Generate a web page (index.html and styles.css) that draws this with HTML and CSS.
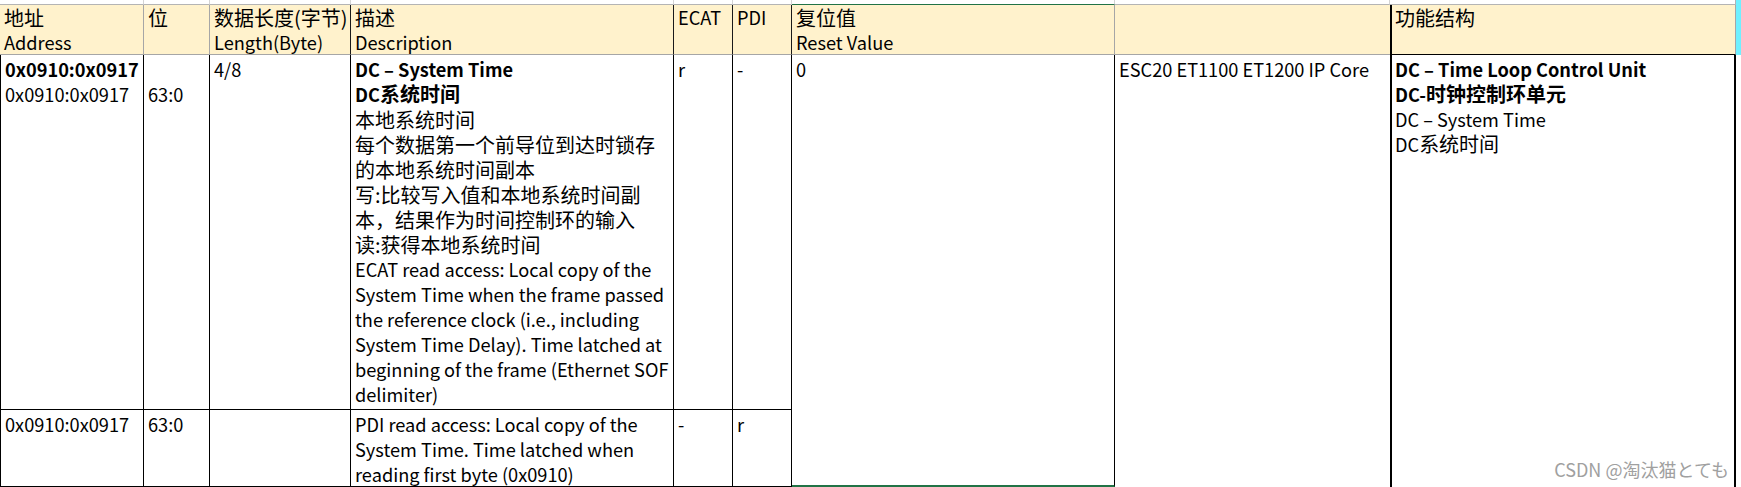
FILE: index.html
```html
<!DOCTYPE html>
<html lang="zh-CN">
<head>
<meta charset="utf-8">
<title>DC – System Time</title>
<link rel="stylesheet" href="styles.css">
</head>
<body>
<div class="sheet">
  <!-- row above header (gridlines of previous row) -->
  <div class="pre"></div>
  <div class="pre"></div>
  <div class="pre"></div>
  <div class="pre"></div>
  <div class="pre"></div>
  <div class="pre"></div>
  <div class="pre pre-sel"></div>
  <div class="pre"></div>
  <div class="pre pre-func"></div>
  <div class="edge"></div>

  <!-- header -->
  <div class="hd gray-r"><div class="zh">地址</div><div>Address</div></div>
  <div class="hd gray-r"><div class="zh">位</div></div>
  <div class="hd dark-r"><div class="zh">数据长度(字节)</div><div>Length(Byte)</div></div>
  <div class="hd dark-r"><div class="zh">描述</div><div>Description</div></div>
  <div class="hd dark-r"><div>ECAT</div></div>
  <div class="hd dark-r"><div>PDI</div></div>
  <div class="hd gray-r"><div class="zh">复位值</div><div>Reset Value</div></div>
  <div class="hd no-r"></div>
  <div class="hd hd-func"><div class="zh">功能结构</div></div>
  <div class="edge"></div>

  <!-- row 1 -->
  <div class="td first"><div class="b">0x0910:0x0917</div><div>0x0910:0x0917</div></div>
  <div class="td"><div>&nbsp;</div><div>63:0</div></div>
  <div class="td"><div>4/8</div></div>
  <div class="td desc">
    <div class="b">DC – System Time</div>
    <div class="b">DC<span class="zh">系统时间</span></div>
    <div class="zh">本地系统时间</div>
    <div class="zh">每个数据第一个前导位到达时锁存</div>
    <div class="zh">的本地系统时间副本</div>
    <div class="zh">写:比较写入值和本地系统时间副</div>
    <div class="zh">本，结果作为时间控制环的输入</div>
    <div class="zh">读:获得本地系统时间</div>
    <div>ECAT read access: Local copy of the</div>
    <div>System Time when the frame passed</div>
    <div>the reference clock (i.e., including</div>
    <div>System Time Delay). Time latched at</div>
    <div>beginning of the frame (Ethernet SOF</div>
    <div>delimiter)</div>
  </div>
  <div class="td"><div>r</div></div>
  <div class="td"><div>-</div></div>
  <div class="td span2 reset"><div>0</div></div>
  <div class="td span2 blank"><div>ESC20 ET1100 ET1200 IP Core</div></div>
  <div class="td span2 func">
    <div class="b">DC – Time Loop Control Unit</div>
    <div class="b">DC-<span class="zh">时钟控制环单元</span></div>
    <div>DC – System Time</div>
    <div>DC<span class="zh">系统时间</span></div>
  </div>
  <div class="span2 edge-body"></div>

  <!-- row 2 -->
  <div class="td first"><div>0x0910:0x0917</div></div>
  <div class="td"><div>63:0</div></div>
  <div class="td"></div>
  <div class="td desc">
    <div>PDI read access: Local copy of the</div>
    <div>System Time. Time latched when</div>
    <div>reading first byte (0x0910)</div>
  </div>
  <div class="td"><div>-</div></div>
  <div class="td"><div>r</div></div>

  <div class="watermark">CSDN @淘汰猫とても</div>
</div>
</body>
</html>
```

FILE: styles.css
```css
* {
  box-sizing: border-box;
}

html, body {
  margin: 0;
  padding: 0;
  background: #ffffff;
}

body {
  font-family: "Noto Sans CJK SC", "Noto Sans", sans-serif;
  font-size: 18.2px;
  line-height: 25px;
  color: #000000;
}

.sheet {
  position: relative;
  display: grid;
  grid-template-columns: 144px 66px 141px 323px 59px 59px 323px 275px 346px 5px;
  grid-template-rows: 5px 50px 355px 77px;
  width: 1741px;
  height: 487px;
  overflow: hidden;
}

.sheet > div > div {
  white-space: nowrap;
  height: 25px;
}

.zh {
  font-size: 20px;
}

span.zh {
  line-height: 1;
}

/* row above the header */
.pre {
  border-right: 1px solid #d4d4d4;
  border-bottom: 1px solid #b4b4b4;
}

.pre-sel {
  border-bottom: 1px solid #217346;
}

.pre-func {
  border-right: 1px solid #b4b4b4;
}

.edge {
  background: #6ff0ff;
}

/* header */
.hd {
  background: #fff2cc;
  border-bottom: 1px solid #a6a6a6;
  padding: 0 3px 0 4px;
}

.gray-r {
  border-right: 1px solid #a6a6a6;
}

.dark-r {
  border-right: 1px solid #1a1a1a;
}

.no-r {
  border-right: none;
}

.hd-func {
  border-left: 2px solid #000000;
  border-right: 1px solid #a6a6a6;
  border-bottom: 1px solid #000000;
  padding-left: 3px;
}

/* body cells */
.td {
  border-right: 1px solid #000000;
  border-bottom: 1px solid #000000;
  padding: 2px 3px 0 4px;
}

.td.first {
  border-left: 1px solid #000000;
  padding-left: 4px;
}

.span2 {
  grid-row: span 2;
}

.reset {
  border-bottom: 2px solid #217346;
}

.blank {
  border-right: none;
  border-bottom: none;
}

.func {
  border-left: 2px solid #000000;
  border-right: 2px solid #000000;
  border-bottom: none;
  padding-left: 3px;
}

.edge-body {
  background: #ffffff;
}

.b {
  font-weight: 700;
}

.watermark {
  position: absolute;
  right: 12px;
  bottom: 9px;
  font-size: 18px;
  line-height: 18px;
  color: #a0a0a0;
  white-space: nowrap;
}
```
